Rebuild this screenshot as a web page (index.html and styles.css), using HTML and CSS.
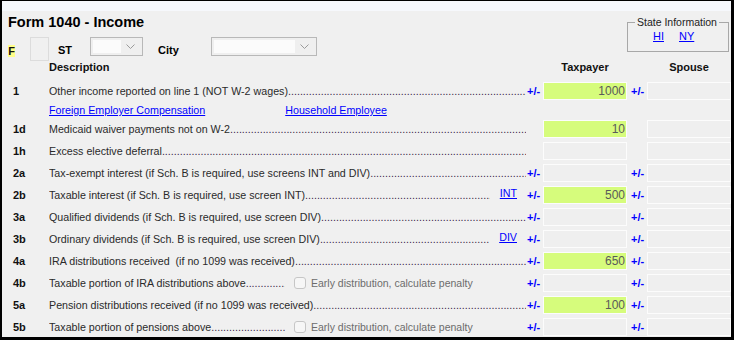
FILE: index.html
```html
<html>
    <head>
        <link rel="stylesheet" href="styles.css">
        <title>Form 1040 - Income</title>
    </head>
    <body>
        <div class="window">
            <div class="topstrip"></div>
            <div class="panel">
                <div class="header">
                    <div class="headerLeft">
                        <h1 class="title">Form 1040 - Income</h1>
                        <div class="filters">
                            <span class="flag">F</span>
                            <span class="box"></span>
                            <span class="label stLabel">ST</span>
                            <span class="select stSelect"><span class="field"></span><span class="arrow"><svg width="9" height="5" viewBox="0 0 9 5"><path d="M0.5 0.5 L4.5 4.5 L8.5 0.5" fill="none" stroke="#9a9a9a" stroke-width="1"/></svg></span></span>
                            <span class="label cityLabel">City</span>
                            <span class="select citySelect"><span class="field"></span><span class="arrow"><svg width="9" height="5" viewBox="0 0 9 5"><path d="M0.5 0.5 L4.5 4.5 L8.5 0.5" fill="none" stroke="#9a9a9a" stroke-width="1"/></svg></span></span>
                        </div>
                    </div>
                    <fieldset class="stateInfo">
                        <legend>State Information</legend>
                        <div class="stateLinks"><a>HI</a><a>NY</a></div>
                    </fieldset>
                </div>

                <div class="row heads">
                    <span></span>
                    <span class="colHead">Description</span>
                    <span></span>
                    <span class="colHead center">Taxpayer</span>
                    <span></span>
                    <span class="colHead center">Spouse</span>
                </div>

                <div class="row">
                    <span class="num">1</span>
                    <span class="desc"><span class="text">Other income reported on line 1 (NOT W-2 wages)</span><span class="dots"></span></span>
                    <span class="pm">+/-</span>
                    <span class="amt filled">1000</span>
                    <span class="pm second">+/-</span>
                    <span class="amt"></span>
                </div>
                <div class="linkRow">
                    <a>Foreign Employer Compensation</a>
                    <a>Household Employee</a>
                </div>
                <div class="row">
                    <span class="num">1d</span>
                    <span class="desc"><span class="text">Medicaid waiver payments not on W-2</span><span class="dots"></span></span>
                    <span></span>
                    <span class="amt filled">10</span>
                    <span></span>
                    <span class="amt"></span>
                </div>
                <div class="row">
                    <span class="num">1h</span>
                    <span class="desc"><span class="text">Excess elective deferral</span><span class="dots"></span></span>
                    <span></span>
                    <span class="amt"></span>
                    <span></span>
                    <span class="amt"></span>
                </div>
                <div class="row">
                    <span class="num">2a</span>
                    <span class="desc"><span class="text">Tax-exempt interest (if Sch. B is required, use screens INT and DIV)</span><span class="dots"></span></span>
                    <span class="pm">+/-</span>
                    <span class="amt"></span>
                    <span class="pm second">+/-</span>
                    <span class="amt"></span>
                </div>
                <div class="row">
                    <span class="num">2b</span>
                    <span class="desc"><span class="text">Taxable interest (if Sch. B is required, use screen INT)</span><span class="dots"></span><a class="ref">INT</a></span>
                    <span class="pm">+/-</span>
                    <span class="amt filled">500</span>
                    <span class="pm second">+/-</span>
                    <span class="amt"></span>
                </div>
                <div class="row">
                    <span class="num">3a</span>
                    <span class="desc"><span class="text">Qualified dividends (if Sch. B is required, use screen DIV)</span><span class="dots"></span></span>
                    <span class="pm">+/-</span>
                    <span class="amt"></span>
                    <span class="pm second">+/-</span>
                    <span class="amt"></span>
                </div>
                <div class="row">
                    <span class="num">3b</span>
                    <span class="desc"><span class="text">Ordinary dividends (if Sch. B is required, use screen DIV)</span><span class="dots"></span><a class="ref">DIV</a></span>
                    <span class="pm">+/-</span>
                    <span class="amt"></span>
                    <span class="pm second">+/-</span>
                    <span class="amt"></span>
                </div>
                <div class="row">
                    <span class="num">4a</span>
                    <span class="desc"><span class="text">IRA distributions received &nbsp;(if no 1099 was received)</span><span class="dots"></span></span>
                    <span class="pm">+/-</span>
                    <span class="amt filled">650</span>
                    <span class="pm second">+/-</span>
                    <span class="amt"></span>
                </div>
                <div class="row">
                    <span class="num">4b</span>
                    <span class="desc"><span class="lead"><span class="text">Taxable portion of IRA distributions above</span><span class="dots"></span></span><span class="check"></span><span class="checkLabel">Early distribution, calculate penalty</span></span>
                    <span class="pm">+/-</span>
                    <span class="amt"></span>
                    <span class="pm second">+/-</span>
                    <span class="amt"></span>
                </div>
                <div class="row">
                    <span class="num">5a</span>
                    <span class="desc"><span class="text">Pension distributions received (if no 1099 was received)</span><span class="dots"></span></span>
                    <span class="pm">+/-</span>
                    <span class="amt filled">100</span>
                    <span class="pm second">+/-</span>
                    <span class="amt"></span>
                </div>
                <div class="row">
                    <span class="num">5b</span>
                    <span class="desc"><span class="lead"><span class="text">Taxable portion of pensions above</span><span class="dots"></span></span><span class="check"></span><span class="checkLabel">Early distribution, calculate penalty</span></span>
                    <span class="pm">+/-</span>
                    <span class="amt"></span>
                    <span class="pm second">+/-</span>
                    <span class="amt"></span>
                </div>
            </div>
        </div>
    </body>
</html>
```

FILE: styles.css
```css
html, body { margin: 0; padding: 0; }
body { background: #000; font-family: "Liberation Sans", Arial, sans-serif; font-size: 11px; color: #2a2a2a; }
a { color: #0000ff; text-decoration: underline; cursor: pointer; }

.window { margin: 1px 3px 0 2px; height: 336px; overflow: hidden; }
.topstrip { height: 10px; background: #f6f8fc; }
.panel { height: 326px; background: #f0f0f0; overflow: hidden; }

/* header: title, filters and state box */
.header { display: flex; justify-content: space-between; align-items: flex-start; height: 50px; }
.headerLeft { padding-left: 6px; }
.title { margin: 0; padding-top: 2px; font-size: 14.5px; line-height: 18px; font-weight: bold; color: #000; }

.filters { display: flex; align-items: flex-start; height: 24px; margin-top: 6px; }
.flag { margin-top: 8px; width: 7px; line-height: 12px; background: #ffff88; color: #111; font-weight: bold; text-align: center; }
.box { width: 19px; height: 24px; box-sizing: border-box; margin-left: 15px; border: 1px solid #dcdcdc; }
.label { margin-top: 7px; line-height: 13px; font-weight: bold; color: #000; }
.stLabel { margin-left: 9px; }
.cityLabel { margin-left: 15px; }
.select { display: flex; height: 19px; box-sizing: border-box; padding: 2px; border: 1px solid #b8b8b8; background: #efefef; }
.select .field { flex: 1; background: #fbfbfb; }
.select .arrow { width: 19px; display: flex; align-items: center; justify-content: center; }
.stSelect { width: 53px; margin-left: 18px; }
.citySelect { width: 106px; margin-left: 32px; }

.stateInfo { width: 102px; box-sizing: border-box; margin: 5px 2px 0 0; padding: 1px 0 8px 7px; border: 1px solid #a8a8a8; min-width: 0; }
.stateInfo legend { padding: 0 2px; font-size: 10.5px; line-height: 13px; color: #222; }
.stateLinks { display: flex; gap: 15px; padding-left: 18px; line-height: 13px; }

/* rows */
.row { display: grid; grid-template-columns: 47px 477px 17px 84px 20px 84px; height: 22px; align-items: center; }
.heads { height: 19px; align-items: start; }
.colHead { font-weight: bold; color: #111; line-height: 13px; }
.center { text-align: center; }

.num { padding-left: 11px; font-weight: bold; color: #111; line-height: 13px; }
.desc { display: flex; align-items: center; overflow: hidden; white-space: nowrap; font-size: 10.7px; line-height: 13px; }
.desc .text { flex: none; }
.dots { flex: 1; overflow: hidden; color: #3e2a4a; }
.dots::after { content: "..........................................................................................................................................................................."; }
.ref { margin: 0 9px 3px 10px; }

.lead { display: flex; width: 236px; flex: none; overflow: hidden; }
.check { width: 12px; height: 12px; box-sizing: border-box; margin-left: 9px; border: 1px solid #c6c6c6; border-radius: 3px; background: #f6f6f6; flex: none; }
.checkLabel { margin-left: 5px; font-size: 10.5px; color: #6c6c6c; }

.pm { align-self: end; margin-bottom: 4px; padding-left: 1px; font-weight: bold; color: #0000ff; line-height: 13px; }
.pm.second { padding-left: 4px; }
.amt { height: 18px; box-sizing: border-box; border: 1px solid #fcfcfc; background: #efefef; text-align: right; padding-right: 1px; font-size: 12px; line-height: 16px; color: #5a5a5a; }
.amt.filled { background: #d6fc7c; }

.linkRow { display: flex; gap: 80px; height: 16px; padding-left: 47px; font-size: 10.7px; line-height: 16px; }
```
